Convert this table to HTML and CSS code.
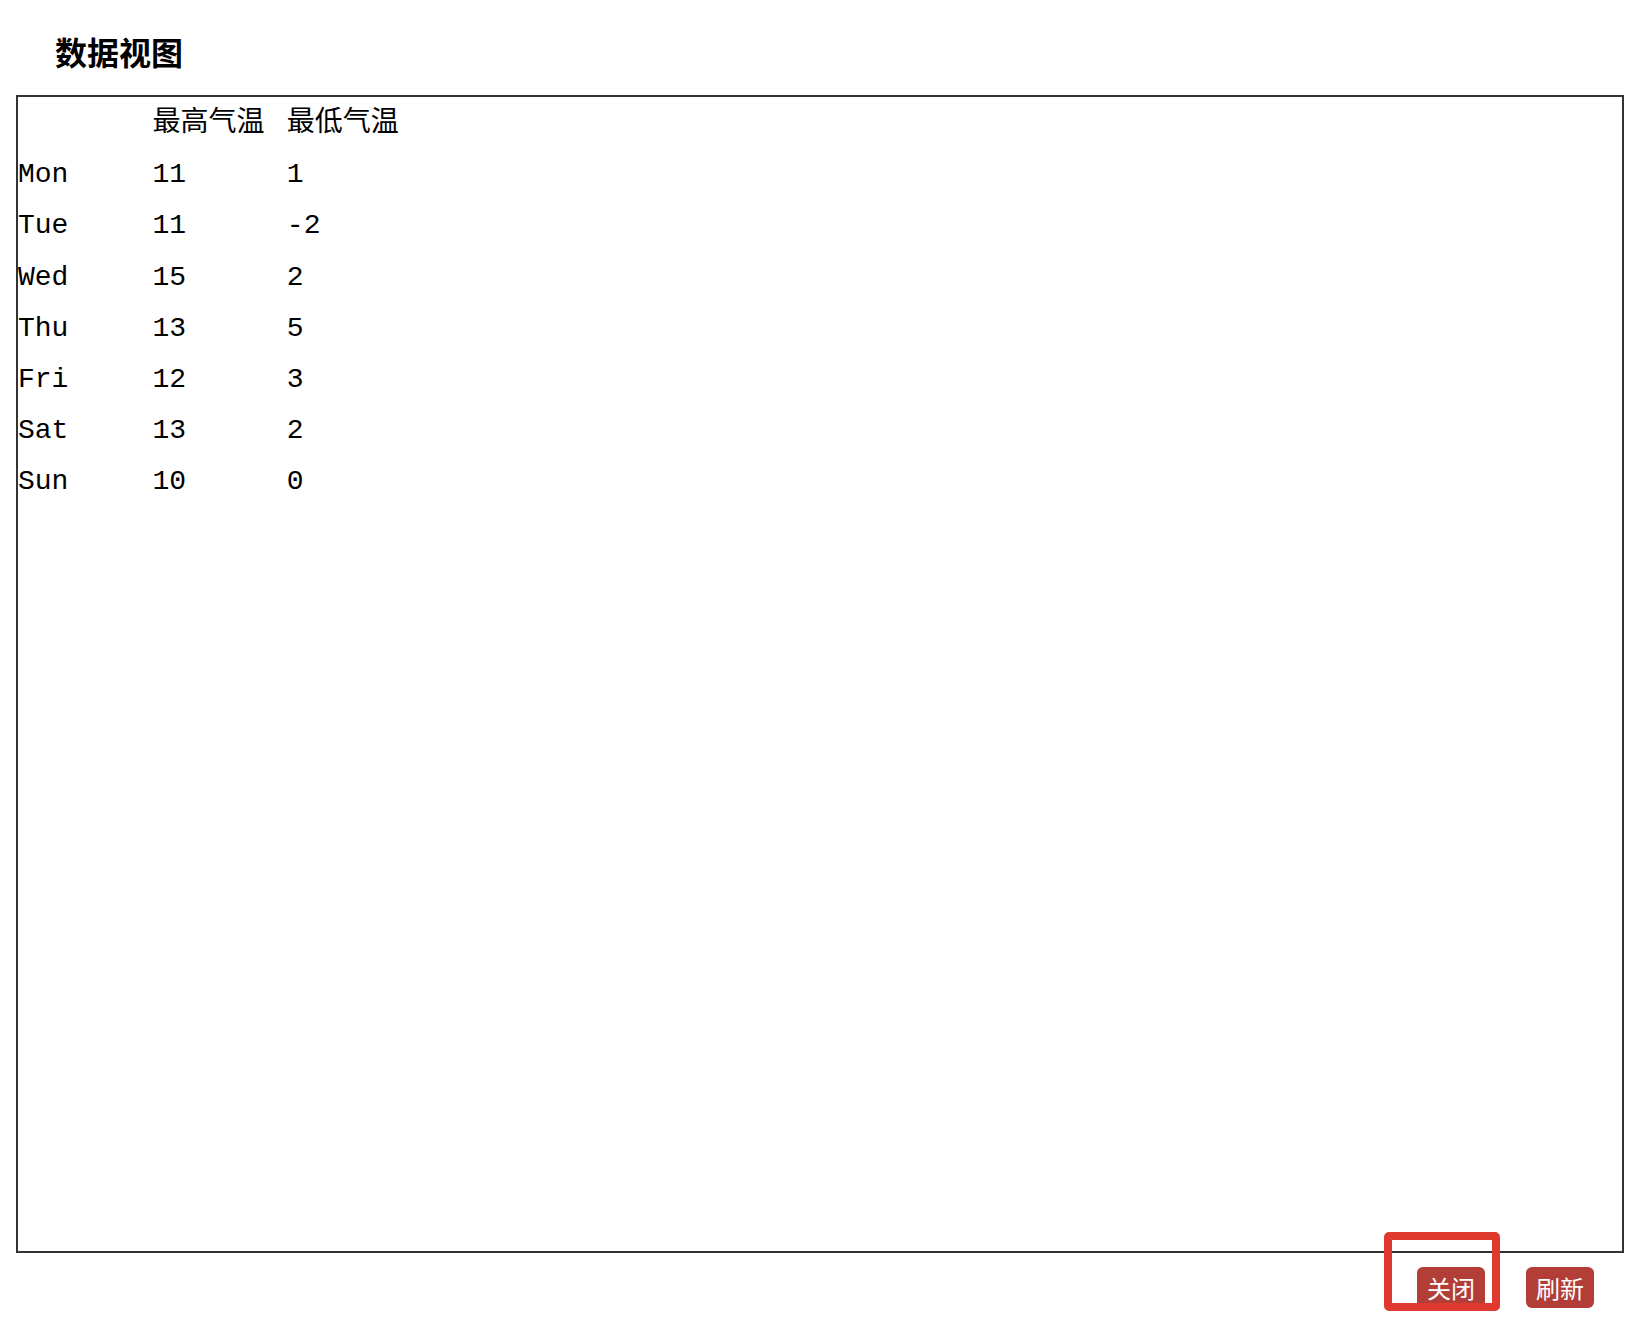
FILE: index.html
```html
<!DOCTYPE html>
<html lang="zh-CN">
<head>
<meta charset="utf-8">
<title>数据视图</title>
<link rel="stylesheet" href="styles.css">
</head>
<body>
<div class="view">
  <div class="title">数据视图</div>
  <pre class="data">	最高气温	最低气温
Mon	11	1
Tue	11	-2
Wed	15	2
Thu	13	5
Fri	12	3
Sat	13	2
Sun	10	0</pre>
  <div class="actions">
    <button class="btn btn-close">关闭<span class="highlight"></span></button>
    <button class="btn">刷新</button>
  </div>
</div>
</body>
</html>
```
FILE: styles.css
```css
html, body {
  margin: 0;
  padding: 0;
  background: #ffffff;
}

.view {
  width: 1644px;
  height: 1326px;
  display: flex;
  flex-direction: column;
  box-sizing: border-box;
  padding: 35px 20px 0 16px;
}

.title {
  font-family: "Noto Sans CJK SC", "Noto Sans", sans-serif;
  font-weight: 700;
  font-size: 32px;
  line-height: 32px;
  height: 32px;
  color: #000;
  padding-left: 39px;
  margin-bottom: 28px;
}

.data {
  margin: 0;
  padding: 1px 0 0 0;
  height: 1158px;
  box-sizing: border-box;
  border: 2px solid #333333;
  font-family: "Liberation Mono", "Noto Sans CJK SC", monospace;
  font-size: 28px;
  line-height: 51.2px;
  tab-size: 8;
  -moz-tab-size: 8;
  color: #000;
  white-space: pre;
  overflow: hidden;
}

.actions {
  display: flex;
  justify-content: flex-end;
  gap: 41px;
  margin-top: 14px;
  padding-right: 30px;
}

.btn {
  position: relative;
  border: none;
  margin: 0;
  font-family: "Noto Sans CJK SC", "Noto Sans", sans-serif;
  font-size: 24px;
  line-height: 33px;
  height: 41px;
  padding: 4px 10px;
  border-radius: 6px;
  background: #b23e37;
  color: #ffffff;
}

.highlight {
  position: absolute;
  left: -33px;
  top: -35px;
  width: 116px;
  height: 79px;
  box-sizing: border-box;
  border: 8px solid #e0392f;
  border-radius: 5px;
}
```
